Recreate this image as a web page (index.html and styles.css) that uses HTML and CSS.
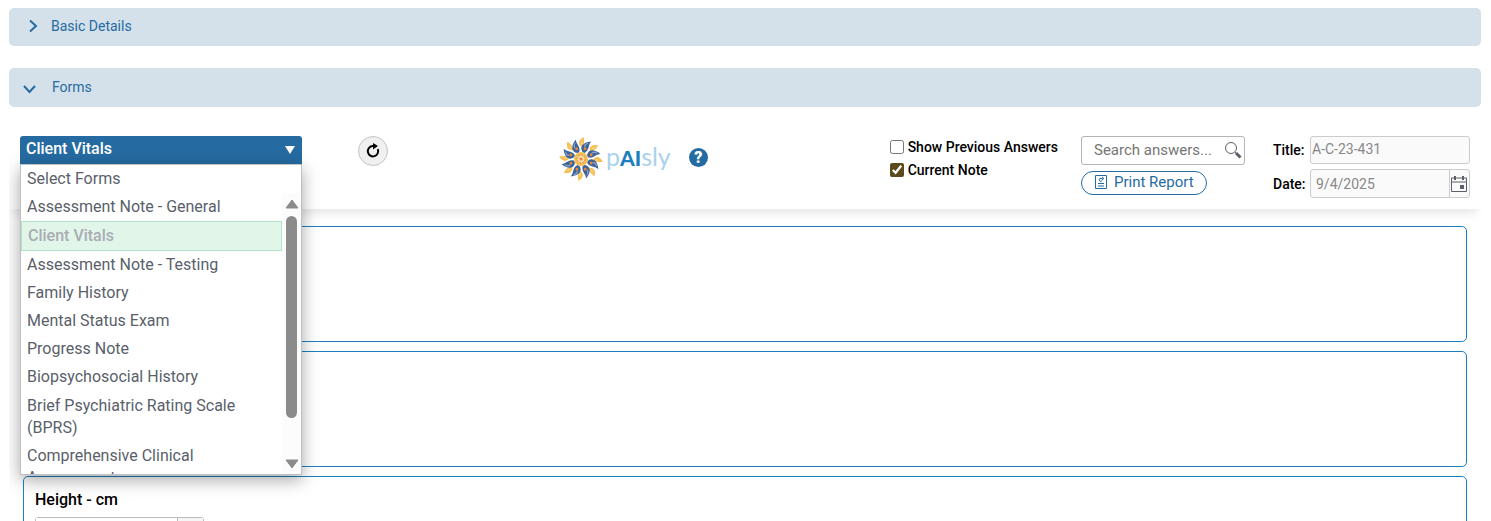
FILE: index.html
```html
<!DOCTYPE html>
<html lang="en">
<head>
  <meta charset="UTF-8" />
  <meta name="viewport" content="width=device-width, initial-scale=1.0"/>
  <title>Client Vitals</title>
  <link rel="stylesheet" href="styles.css">
</head>
<body>
  <!-- Accordion headers -->
  <button class="accordion" type="button" aria-expanded="false">
    <svg class="chevron" viewBox="0 0 14 14"><path d="M4 1.500L10 7l-6 5.500"/></svg>
    Basic Details
  </button>
  <button class="accordion accordion-open" type="button" aria-expanded="true">
    <svg class="chevron" viewBox="0 0 14 14"><path d="M1 6L6.500 12 12 6"/></svg>
    Forms
  </button>

  <!-- Toolbar -->
  <div class="toolbar">
    <div class="form-picker">
      <select class="form-select" aria-label="Form">
        <option>Client Vitals</option>
      </select>
      <svg class="select-arrow" viewBox="0 0 10 8"><path d="M0 0h10L5 8z"/></svg>
      <div class="form-menu">
        <div class="form-option">Select Forms</div>
        <div class="form-scroll">
          <ul class="form-list" role="listbox" aria-label="Forms">
            <li class="form-option" role="option">Assessment Note - General</li>
            <li class="form-option selected" role="option" aria-selected="true">Client Vitals</li>
            <li class="form-option" role="option">Assessment Note - Testing</li>
            <li class="form-option" role="option">Family History</li>
            <li class="form-option" role="option">Mental Status Exam</li>
            <li class="form-option" role="option">Progress Note</li>
            <li class="form-option" role="option">Biopsychosocial History</li>
            <li class="form-option wrapped" role="option">Brief Psychiatric Rating Scale (BPRS)</li>
            <li class="form-option" role="option">Comprehensive Clinical Assessment</li>
          </ul>
          <div class="scrollbar">
            <svg class="scroll-arrow" viewBox="0 0 14 10"><path d="M7 1l6 8H1z"/></svg>
            <div class="scroll-thumb"></div>
            <svg class="scroll-arrow" viewBox="0 0 14 10"><path d="M7 9l6-8H1z"/></svg>
          </div>
        </div>
      </div>
    </div>

    <button class="refresh" type="button" aria-label="Refresh">
      <svg viewBox="0 0 16 16"><path class="arc" d="M9 3H7.500a5.200 5.200 0 1 0 5.300 3.200"/><path d="M8 0l5 3-5 3.500z"/></svg>
    </button>

    <div class="brand">
      <svg class="sun" viewBox="-23 -23 46 46">
        <defs>
          <g id="ray">
            <path class="gold" d="M0-12C-4-15-3-19 2-22C2-19 4-15 0-12z"/>
            <path class="gold-tip" d="M0-14c-1-2 0-3 1-4 0 2 1 2-1 4z"/>
          </g>
          <g id="leaf">
            <path class="blue" d="M-1-7C-6-10-5-16 3-20C1-16 5-11 1-7z"/>
            <path class="blue-line" d="M-1-12c-1-2 0-4 2-5"/>
            <circle class="orange" cx="0" cy="-11" r="1.400"/>
          </g>
        </defs>
        <use href="#ray" transform="rotate(2)"/><use href="#ray" transform="rotate(47)"/><use href="#ray" transform="rotate(92)"/><use href="#ray" transform="rotate(137)"/>
        <use href="#ray" transform="rotate(182)"/><use href="#ray" transform="rotate(227)"/><use href="#ray" transform="rotate(272)"/><use href="#ray" transform="rotate(317)"/>
        <use href="#leaf" transform="rotate(22)"/><use href="#leaf" transform="rotate(67)"/><use href="#leaf" transform="rotate(112)"/><use href="#leaf" transform="rotate(157)"/>
        <use href="#leaf" transform="rotate(202)"/><use href="#leaf" transform="rotate(247)"/><use href="#leaf" transform="rotate(292)"/><use href="#leaf" transform="rotate(337)"/>
        <circle class="gold" r="7"/>
        <circle class="ring" r="4"/>
        <circle class="orange" r="1.500"/>
      </svg>
      <span class="brand-name">p<b>AI</b>sly</span>
      <button class="help" type="button" aria-label="Help">?</button>
    </div>

    <div class="checks">
      <label class="check"><input type="checkbox"> Show Previous Answers</label>
      <label class="check"><input type="checkbox" checked> Current Note</label>
    </div>

    <div class="search-group">
      <div class="search">
        <input type="text" placeholder="Search answers..." aria-label="Search answers">
        <svg viewBox="0 0 18 18"><circle cx="7" cy="7" r="5.500"/><path d="M11 11l2 2"/><path class="handle" d="M12 12l4.500 4.500"/></svg>
      </div>
      <button class="print" type="button">
        <svg viewBox="0 0 14 14"><path d="M1.500.500h11v13h-11zM4 8.500h6M4 11h6M8.500 3.500H6a1.500 1.500 0 1 0 2 2M8 2l2 1.500-2 1.500"/></svg>
        Print Report
      </button>
    </div>

    <div class="fields">
      <label for="title">Title:</label>
      <input class="field" id="title" type="text" value="A-C-23-431" disabled>
      <label for="date">Date:</label>
      <div class="date-field">
        <input id="date" type="text" value="9/4/2025" disabled>
        <button type="button" aria-label="Open calendar" disabled>
          <svg viewBox="0 0 18 18"><path class="line" d="M1.500 3h15v13.500h-15zM1.500 7h15"/><path d="M4 1h2v4H4zM12 1h2v4h-2zM10 10h4v4h-4z"/></svg>
        </button>
      </div>
    </div>
  </div>

  <!-- Question panels -->
  <div class="panels">
    <div class="panel"></div>
    <div class="panel"></div>
    <div class="panel">
      <label class="question" for="height">Height - cm</label>
      <div class="number">
        <input id="height" type="text">
        <button type="button" aria-label="Change value"></button>
      </div>
    </div>
  </div>
</body>
</html>
```
FILE: styles.css
```css
* {
  box-sizing: border-box;
}

body {
  margin: 8px 10px 0 9px;
  font-family: Roboto, "Liberation Sans", sans-serif;
  font-size: 14px;
  color: #000;
  background-color: #fff;
}

button, input, select {
  font-family: inherit;
  margin: 0;
}

.accordion {
  display: flex;
  align-items: center;
  gap: 11px;
  width: 100%;
  height: 38px;
  padding: 0 17px 2px;
  border: none;
  border-radius: 5px;
  background-color: #d4e1ea;
  color: #256ba2;
  font-size: 14px;
}

.accordion-open {
  height: 39px;
  margin-top: 22px;
  padding: 0 14px 2px;
  gap: 15px;
}

.chevron {
  width: 14px;
  height: 14px;
  fill: none;
  stroke: #256ba2;
  stroke-width: 2;
}

.toolbar {
  display: flex;
  align-items: flex-start;
  margin-top: 18px;
  padding: 11px;
  background-color: #fff;
  box-shadow: 0 8px 10px -4px rgba(0, 0, 0, 0.1);
}

/* Form drop-down */
.form-picker {
  position: relative;
  width: 282px;
}

.form-select {
  display: block;
  width: 100%;
  height: 28px;
  padding: 0 6px 3px;
  appearance: none;
  border: none;
  border-radius: 3px 3px 0 0;
  background-color: #256ba2;
  color: #fff;
  font-size: 16px;
  font-weight: 500;
}

.select-arrow {
  position: absolute;
  top: 10px;
  right: 7px;
  width: 10px;
  height: 8px;
  fill: #fff;
}

.form-menu {
  position: absolute;
  top: 28px;
  left: 0;
  z-index: 2;
  width: 100%;
  border: 1px solid #c0c0c4;
  background-color: #fff;
  box-shadow: 0 5px 16px rgba(0, 0, 0, 0.35);
}

.form-scroll {
  display: flex;
  height: 281px;
  overflow: hidden;
}

.form-list {
  flex: 1;
  margin: 0;
  padding: 0;
  list-style: none;
}

.form-option {
  padding: 3px 6px;
  color: #5a5f6b;
  font-size: 16px;
  line-height: 22px;
}

.wrapped {
  padding-top: 4px;
}

.selected {
  border: 1px solid #b0e3c8;
  background-color: #e1f5e9;
  color: #a9adb3;
  font-weight: 500;
}

.scrollbar {
  display: flex;
  flex-direction: column;
  align-items: center;
  width: 19px;
  padding: 6px 0 5px;
  background-color: #fcfcfc;
}

.scroll-arrow {
  width: 14px;
  height: 10px;
  fill: #8b8b8b;
  stroke: #8b8b8b;
  stroke-linejoin: round;
}

.scroll-thumb {
  width: 11px;
  height: 202px;
  margin: 7px 0 auto;
  border-radius: 6px;
  background-color: #8b8b8b;
}

.refresh {
  width: 30px;
  height: 30px;
  margin-left: 56px;
  padding: 6px;
  border: 1px solid #c4c4c4;
  border-radius: 50%;
  background-color: #f0f0f0;
}

.refresh svg {
  display: block;
  width: 16px;
  height: 16px;
}

.refresh .arc {
  fill: none;
  stroke: #000;
  stroke-width: 2;
}

/* Logo */
.brand {
  display: flex;
  align-items: flex-start;
  margin-left: 170px;
}

.sun {
  width: 46px;
  height: 46px;
}

.gold {
  fill: #f6bf54;
}

.gold-tip {
  fill: #fbd98c;
}

.blue {
  fill: #3d659b;
}

.blue-line {
  fill: none;
  stroke: #8ba9c9;
}

.orange {
  fill: #ef8432;
}

.ring {
  fill: #fbdda0;
  stroke: #d28a4c;
  stroke-dasharray: 2 1;
}

.brand-name {
  margin-left: 2px;
  color: #a9d2ee;
  font-family: Lato, sans-serif;
  font-size: 25px;
  line-height: 40px;
}

.brand-name b {
  color: #1c80c0;
  font-size: 21px;
  font-weight: 900;
}

.help {
  width: 19px;
  height: 19px;
  margin: 12px 0 0 18px;
  padding: 0;
  border: none;
  border-radius: 50%;
  background-color: #256ba2;
  color: #fff;
  font-size: 16px;
  font-weight: 900;
  line-height: 19px;
}

.checks {
  display: flex;
  flex-direction: column;
  gap: 7px;
  margin-left: auto;
  padding-top: 3px;
}

.check {
  display: flex;
  align-items: center;
  gap: 4px;
  font-weight: 500;
  line-height: 16px;
}

.check input {
  width: 14px;
  height: 14px;
  margin: 0;
  accent-color: #5b4a1b;
}

.search-group {
  width: 164px;
  margin-left: 23px;
}

.search {
  display: flex;
  align-items: center;
  height: 29px;
  padding: 0 2px 2px 12px;
  border: 1px solid #b5b5b5;
  border-radius: 3px;
}

.search input {
  flex: 1;
  min-width: 0;
  padding: 0;
  border: none;
  outline: none;
  font-size: 15px;
}

.search svg {
  width: 18px;
  height: 18px;
  fill: none;
  stroke: #5a5f6b;
  stroke-width: 1;
}

.search .handle {
  stroke-width: 3;
}

.print {
  display: flex;
  align-items: center;
  gap: 6px;
  height: 24px;
  margin-top: 6px;
  padding: 0 12px 2px;
  border: 1px solid #256ba2;
  border-radius: 12px;
  background-color: #fff;
  color: #256ba2;
  font-size: 15px;
}

.print svg {
  width: 14px;
  height: 14px;
  fill: none;
  stroke: #256ba2;
}

.fields {
  display: grid;
  grid-template-columns: 31px 160px;
  gap: 5px 6px;
  align-items: center;
  margin-left: 28px;
  font-weight: 500;
}

.field, .date-field {
  width: 100%;
  height: 28px;
  border: 1px solid #ccc;
  border-radius: 3px;
  background-color: #fafafa;
}

.field {
  padding: 0 1px 2px;
  color: #888;
  font-size: 14px;
}

.date-field {
  display: flex;
  height: 29px;
}

.date-field input {
  flex: 1;
  min-width: 0;
  padding: 0 5px;
  border: none;
  background-color: transparent;
  color: #888;
  font-size: 14px;
}

.date-field button {
  width: 20px;
  padding: 0;
  border: none;
  border-left: 1px solid #ccc;
  background-color: transparent;
}

.date-field svg {
  display: block;
  width: 18px;
  height: 18px;
  fill: #5a5f6b;
}

.date-field .line {
  fill: none;
  stroke: #5a5f6b;
}

/* Panels */
.panels {
  display: flex;
  flex-direction: column;
  gap: 9px;
  padding: 17px 14px 0;
}

.panel {
  min-height: 116px;
  padding: 13px 11px;
  border: 1px solid #1c80c0;
  border-radius: 5px;
}

.question {
  display: block;
  font-size: 16px;
  font-weight: 500;
  line-height: 20px;
}

.number {
  display: flex;
  width: 169px;
  height: 28px;
  margin-top: 7px;
  border: 1px solid #bbb;
  border-radius: 3px;
}

.number input {
  flex: 1;
  min-width: 0;
  border: none;
}

.number button {
  width: 26px;
  border: none;
  border-left: 1px solid #bbb;
  background-color: #f5f5f5;
}
```
